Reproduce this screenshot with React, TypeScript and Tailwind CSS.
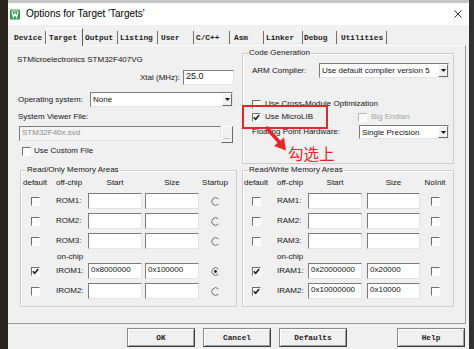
import * as React from 'react';

const sans = "font-['Liberation_Sans',Arial,sans-serif]";
const mono = "font-['Liberation_Mono','Courier_New',monospace] text-[7.8px] font-bold text-[#1c1c1c]";

const TABS = [
	{ label: 'Device', cls: 'w-[36px] pl-[4px]' },
	{ label: 'Target', cls: 'w-[37px] pl-[2px]', active: true },
	{ label: 'Output', cls: 'w-[35px] pl-[2px]' },
	{ label: 'Listing', cls: 'w-[40px] pl-[2px]' },
	{ label: 'User', cls: 'w-[36px] pl-[3px]' },
	{ label: 'C/C++', cls: 'w-[36px] pl-[2px]' },
	{ label: 'Asm', cls: 'w-[34px] pl-[4px]' },
	{ label: 'Linker', cls: 'w-[39px] pl-[2px]' },
	{ label: 'Debug', cls: 'w-[34px] pl-[1px]' },
	{ label: 'Utilities', cls: 'w-[50px] pl-[4px]' },
];

const CheckBox: React.FC<{ checked?: boolean; disabled?: boolean }> = ({ checked, disabled }) => (
	<span
		className={`flex h-[9px] w-[9px] shrink-0 items-center justify-center border border-r-white border-b-white bg-[#fbfbfb] ${
			disabled ? 'border-t-[#b8b8b8] border-l-[#b8b8b8]' : 'border-t-[#6e6e6e] border-l-[#6e6e6e]'
		}`}
	>
		{checked && (
			<svg width="7" height="7" viewBox="0 0 7 7">
				<path d="M0.8 3.2 L2.7 5.3 L6.2 1" fill="none" stroke="#1a1a1a" strokeWidth="1.5" />
			</svg>
		)}
	</span>
);

const Radio: React.FC<{ checked?: boolean }> = ({ checked }) => (
	<svg width="9" height="9" viewBox="0 0 9 9" className="shrink-0">
		<path d="M7.3 1.8 A3.8 3.8 0 1 0 7.3 7.2" fill="none" stroke="#6e6e6e" strokeWidth="1" />
		{checked && <circle cx="4.5" cy="4.5" r="1.4" fill="#1a1a1a" />}
	</svg>
);

const Field: React.FC<{ value?: string; className: string; disabled?: boolean }> = ({
	value,
	className,
	disabled,
}) => (
	<div
		className={`shrink-0 overflow-hidden whitespace-nowrap border border-t-[#7c7c7c] border-l-[#7c7c7c] border-r-[#e4e4e4] border-b-[#e4e4e4] pl-[2px] leading-[11px] ${
			disabled ? 'bg-[#f4f4f4] text-[#8e8e8e]' : 'bg-white text-[#111]'
		} ${className}`}
	>
		{value}
	</div>
);

const Select: React.FC<{ value: string; className: string }> = ({ value, className }) => (
	<div
		className={`flex shrink-0 items-stretch border border-t-[#7c7c7c] border-l-[#7c7c7c] border-r-[#e4e4e4] border-b-[#e4e4e4] bg-white ${className}`}
	>
		<span className="flex-1 truncate pl-[2px] leading-[13px]">{value}</span>
		<span className="flex w-[10px] items-center justify-center border border-t-white border-l-white border-r-[#6e6e6e] border-b-[#6e6e6e] bg-[#f0f0f0]">
			<svg width="5" height="3" viewBox="0 0 5 3">
				<path d="M0 0 H5 L2.5 3 Z" fill="#111" />
			</svg>
		</span>
	</div>
);

const Group: React.FC<{ title: string; className: string; children: React.ReactNode }> = ({
	title,
	className,
	children,
}) => (
	<fieldset className={`border border-[#cdcdcd] shadow-[inset_1px_1px_0_#fff] ${className}`}>
		<legend className="ml-[5px] px-[1px] leading-[10px]">{title}</legend>
		{children}
	</fieldset>
);

const Button: React.FC<{ label: string; className?: string }> = ({ label, className = '' }) => (
	<div
		className={`flex h-[19px] w-[68px] items-center justify-center border border-[#8a8a8a] border-r-[#3c3c3c] border-b-[#3c3c3c] bg-[#f0f0f0] shadow-[inset_1px_1px_0_#fff,inset_-1px_-1px_0_#a0a0a0] ${mono} ${className}`}
	>
		{label}
	</div>
);

type Mem = { name: string; start?: string; size?: string; checked?: boolean; flag?: boolean };

const ROM: Mem[] = [{ name: 'ROM1' }, { name: 'ROM2' }, { name: 'ROM3' }];
const IROM: Mem[] = [
	{ name: 'IROM1', start: '0x8000000', size: '0x100000', checked: true, flag: true },
	{ name: 'IROM2' },
];
const RAM: Mem[] = [{ name: 'RAM1' }, { name: 'RAM2' }, { name: 'RAM3' }];
const IRAM: Mem[] = [
	{ name: 'IRAM1', start: '0x20000000', size: '0x20000', checked: true },
	{ name: 'IRAM2', start: '0x10000000', size: '0x10000', checked: true },
];

const RomRow: React.FC<{ m: Mem; className?: string }> = ({ m, className = '' }) => (
	<div className={`flex h-[16px] items-center ${className}`}>
		<span className="flex w-[28px] justify-center">
			<CheckBox checked={m.checked} />
		</span>
		<span className="w-[39px] pl-[7px]">{m.name}:</span>
		<span className="w-[57px]">
			<Field value={m.start} className="h-[16px] w-[54px]" />
		</span>
		<span className="w-[57px]">
			<Field value={m.size} className="h-[16px] w-[54px]" />
		</span>
		<span className="flex w-[26px] justify-center">
			<Radio checked={m.flag} />
		</span>
	</div>
);

const RamRow: React.FC<{ m: Mem; className?: string }> = ({ m, className = '' }) => (
	<div className={`flex h-[16px] items-center ${className}`}>
		<span className="flex w-[26px] justify-center">
			<CheckBox checked={m.checked} />
		</span>
		<span className="w-[39px] pl-[8px]">{m.name}:</span>
		<span className="w-[59px]">
			<Field value={m.start} className="h-[16px] w-[54px]" />
		</span>
		<span className="w-[56px]">
			<Field value={m.size} className="h-[16px] w-[53px]" />
		</span>
		<span className="flex w-[24px] justify-center">
			<CheckBox />
		</span>
	</div>
);

const KeilIcon = () => (
	<svg width="10" height="11" viewBox="0 0 10 11" className="shrink-0">
		<rect x="0" y="0.5" width="10" height="10" rx="1" fill="#2f9a4a" />
		<path d="M2 3 L3.4 8.2 L5 4.6 L6.6 8.2 L8 3" fill="none" stroke="#fff" strokeWidth="1.2" />
		<rect x="1.5" y="1.5" width="7" height="1" fill="#e8f5e9" />
	</svg>
);

const App: React.FC = () => {
	return (
		<div className={`relative flex h-[349px] w-[474px] overflow-hidden bg-[#2e2e2e] text-[8px] leading-[10px] text-[#151515] ${sans}`}>
			<div className="w-[8px] shrink-0 bg-[#2a231c]" />

			<div className="flex w-[461px] shrink-0 flex-col bg-[#f0f0f0]">
				{/* title bar */}
				<div className="flex h-[25px] items-center border-t-[3px] border-[#c6c6c6] bg-white pl-[2px] pr-[7px]">
					<KeilIcon />
					<span className="ml-[6px] text-[10px] text-black">Options for Target 'Targets'</span>
					<svg width="8" height="8" viewBox="0 0 8 8" className="ml-auto">
						<path d="M0.5 0.5 L7.5 7.5 M7.5 0.5 L0.5 7.5" stroke="#333" strokeWidth="1" />
					</svg>
				</div>

				{/* tabs */}
				<div className="flex h-[20px] items-end pl-[2px]">
					{TABS.map(t => (
						<div
							key={t.label}
							className={`flex items-center whitespace-nowrap ${t.cls} ${mono} ${
								t.active
									? 'relative -mb-px h-[18px] border-x border-t border-l-white border-t-white border-r-[#5a5a5a] bg-[#f0f0f0]'
									: 'mb-[1px] h-[13px] border-r border-r-[#707070]'
							}`}
						>
							{t.label}
						</div>
					))}
				</div>

				{/* panel */}
				<div className="flex h-[279px] w-[458px] border-t border-r border-b border-t-white border-r-[#9a9a9a] border-b-[#9a9a9a]">
					<div className="flex w-[229px] flex-col">
						<div className="mt-[9px] pl-[9px]">STMicroelectronics STM32F407VG</div>
						<div className="mt-[5px] flex h-[15px] items-center justify-end pr-[3px]">
							<span className="mr-[3px]">Xtal (MHz):</span>
							<Field value="25.0" className="h-[15px] w-[51px] text-[9px]" />
						</div>
						<div className="mt-[7px] flex h-[15px] items-center pl-[10px] pr-[4px]">
							<span>Operating system:</span>
							<Select value="None" className="ml-auto h-[15px] w-[143px]" />
						</div>
						<div className="mt-[5px] pl-[10px]">System Viewer File:</div>
						<div className="mt-[4px] flex h-[17px] items-start pl-[11px]">
							<Field disabled value="STM32F40x.svd" className="h-[15px] w-[202px]" />
							<div className="flex h-[17px] w-[12px] items-end justify-center border border-t-white border-l-white border-r-[#6a6a6a] border-b-[#6a6a6a] pb-[2px] leading-[6px] text-[#555]">
								...
							</div>
						</div>
						<div className="mt-[3px] flex h-[10px] items-center pl-[14px]">
							<CheckBox />
							<span className="ml-[3px]">Use Custom File</span>
						</div>

						<Group title="Read/Only Memory Areas" className="ml-[12px] mt-[9px] h-[142px] w-[217px]">
							<div className="mt-[3px] flex h-[10px] whitespace-nowrap">
								<span className="w-[28px] text-center">default</span>
								<span className="w-[39px] pl-[7px]">off-chip</span>
								<span className="mr-[3px] w-[54px] text-center">Start</span>
								<span className="mr-[3px] w-[54px] text-center">Size</span>
								<span className="w-[26px] text-center">Startup</span>
							</div>
							{ROM.map((m, i) => (
								<RomRow key={m.name} m={m} className={i === 0 ? 'mt-[5px]' : 'mt-[4px]'} />
							))}
							<div className="mt-[3px] h-[10px] pl-[36px]">on-chip</div>
							{IROM.map((m, i) => (
								<RomRow key={m.name} m={m} className={i === 0 ? 'mt-[1px]' : 'mt-[4px]'} />
							))}
						</Group>
					</div>

					<div className="ml-[5px] flex w-[212px] flex-col">
						<Group title="Code Generation" className="mt-[2px] h-[116px] w-[212px]">
							<div className="mt-[5px] flex h-[15px] items-center pl-[9px] pr-[4px]">
								<span>ARM Compiler:</span>
								<Select value="Use default compiler version 5" className="ml-auto h-[15px] w-[130px]" />
							</div>
							<div className="mt-[21px] flex h-[10px] items-center pl-[9px]">
								<CheckBox />
								<span className="ml-[4px]">Use Cross-Module Optimization</span>
							</div>
							<div className="mt-[3px] flex h-[10px] items-center pl-[9px]">
								<span className="flex w-[106px] items-center">
									<CheckBox checked />
									<span className="ml-[4px]">Use MicroLIB</span>
								</span>
								<CheckBox disabled />
								<span className="ml-[4px] text-[#a4a4a4]">Big Endian</span>
							</div>
							<div className="mt-[3px] flex h-[14px] items-center pl-[9px] pr-[4px]">
								<span>Floating Point Hardware:</span>
								<Select value="Single Precision" className="ml-auto h-[14px] w-[90px]" />
							</div>
						</Group>

						<Group title="Read/Write Memory Areas" className="mt-[1px] h-[142px] w-[212px]">
							<div className="mt-[3px] flex h-[10px] whitespace-nowrap">
								<span className="w-[26px] text-center">default</span>
								<span className="w-[39px] pl-[8px]">off-chip</span>
								<span className="mr-[5px] w-[54px] text-center">Start</span>
								<span className="mr-[3px] w-[53px] text-center">Size</span>
								<span className="w-[24px] text-center">NoInit</span>
							</div>
							{RAM.map((m, i) => (
								<RamRow key={m.name} m={m} className={i === 0 ? 'mt-[5px]' : 'mt-[4px]'} />
							))}
							<div className="mt-[3px] h-[10px] pl-[34px]">on-chip</div>
							{IRAM.map((m, i) => (
								<RamRow key={m.name} m={m} className={i === 0 ? 'mt-[1px]' : 'mt-[4px]'} />
							))}
						</Group>
					</div>
				</div>

				{/* buttons */}
				<div className="flex pl-[119px] pt-[4px]">
					<Button label="OK" />
					<Button label="Cancel" className="ml-[8px]" />
					<Button label="Defaults" className="ml-[8px]" />
					<Button label="Help" className="ml-[50px]" />
				</div>
			</div>

			<div className="flex-1 bg-[#303030]" />

			{/* annotation */}
			<div className="absolute left-[242px] top-[105px] h-[24px] w-[86px] border-2 border-[#e8262a]" />
			<svg
				className="absolute left-[258px] top-[122px]"
				width="34"
				height="34"
				viewBox="258 122 34 34"
			>
				<path d="M266 127 L280 143" stroke="#e8262a" strokeWidth="3.5" />
				<polygon points="286,150.5 274,146 284,137.5" fill="#e8262a" />
			</svg>
			<span className="absolute left-[288px] top-[143px] font-['Noto_Sans_CJK_SC',sans-serif] text-[15.5px] leading-[20px] text-[#e8262a]">
				勾选上
			</span>
		</div>
	);
};

export default App;
